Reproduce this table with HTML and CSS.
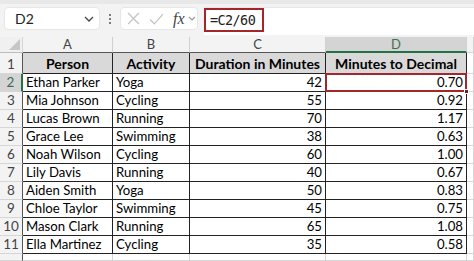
FILE: index.html
```html
<!DOCTYPE html>
<html>
<head>
<meta charset="utf-8">
<link rel="stylesheet" href="styles.css">
</head>
<body>
<div class="app">
  <div class="topbar">
    <div class="namebox">
      <span class="ref">D2</span>
      <svg class="chev" width="10" height="6" viewBox="0 0 10 6"><path d="M1 1 L5 5 L9 1" fill="none" stroke="#444" stroke-width="1.3"/></svg>
    </div>
    <div class="dots"><i></i><i></i><i></i></div>
    <div class="fxbox">
      <svg width="12" height="12" viewBox="0 0 12 12" class="ic-x"><path d="M1 1 L11 11 M11 1 L1 11" stroke="#c4c4c4" stroke-width="1.2" fill="none"/></svg>
      <svg width="14" height="11" viewBox="0 0 14 11" class="ic-ok"><path d="M1 6 L5 10 L13 1" stroke="#c4c4c4" stroke-width="1.2" fill="none"/></svg>
      <span class="fx">fx</span>
      <svg class="chev2" width="8" height="5" viewBox="0 0 8 5"><path d="M1 1 L4 4 L7 1" fill="none" stroke="#999" stroke-width="1.1"/></svg>
    </div>
    <div class="formula">
      <div class="ftext">=C2/60</div>
    </div>
  </div>
  <div class="sheet">
    <div class="c corner"><span class="tri"></span></div>
    <div class="c ch">A</div>
    <div class="c ch">B</div>
    <div class="c ch">C</div>
    <div class="c ch sel">D</div>
    <div class="c ch out"></div>

    <div class="c rh">1</div>
    <div class="c d h">Person</div>
    <div class="c d h">Activity</div>
    <div class="c d h">Duration in Minutes</div>
    <div class="c d h">Minutes to Decimal</div>
    <div class="c g"></div>

    <div class="c rh rsel">2</div>
    <div class="c d">Ethan Parker</div>
    <div class="c d">Yoga</div>
    <div class="c d n">42</div>
    <div class="c d n active">0.70<span class="handle"></span></div>
    <div class="c g"></div>

    <div class="c rh">3</div>
    <div class="c d">Mia Johnson</div>
    <div class="c d">Cycling</div>
    <div class="c d n">55</div>
    <div class="c d n">0.92</div>
    <div class="c g"></div>

    <div class="c rh">4</div>
    <div class="c d">Lucas Brown</div>
    <div class="c d">Running</div>
    <div class="c d n">70</div>
    <div class="c d n">1.17</div>
    <div class="c g"></div>

    <div class="c rh">5</div>
    <div class="c d">Grace Lee</div>
    <div class="c d">Swimming</div>
    <div class="c d n">38</div>
    <div class="c d n">0.63</div>
    <div class="c g"></div>

    <div class="c rh">6</div>
    <div class="c d">Noah Wilson</div>
    <div class="c d">Cycling</div>
    <div class="c d n">60</div>
    <div class="c d n">1.00</div>
    <div class="c g"></div>

    <div class="c rh">7</div>
    <div class="c d">Lily Davis</div>
    <div class="c d">Running</div>
    <div class="c d n">40</div>
    <div class="c d n">0.67</div>
    <div class="c g"></div>

    <div class="c rh">8</div>
    <div class="c d">Aiden Smith</div>
    <div class="c d">Yoga</div>
    <div class="c d n">50</div>
    <div class="c d n">0.83</div>
    <div class="c g"></div>

    <div class="c rh">9</div>
    <div class="c d">Chloe Taylor</div>
    <div class="c d">Swimming</div>
    <div class="c d n">45</div>
    <div class="c d n">0.75</div>
    <div class="c g"></div>

    <div class="c rh">10</div>
    <div class="c d">Mason Clark</div>
    <div class="c d">Running</div>
    <div class="c d n">65</div>
    <div class="c d n">1.08</div>
    <div class="c g"></div>

    <div class="c rh">11</div>
    <div class="c d">Ella Martinez</div>
    <div class="c d">Cycling</div>
    <div class="c d n">35</div>
    <div class="c d n">0.58</div>
    <div class="c g"></div>

    <div class="c rh"></div>
    <div class="c g"></div>
    <div class="c g"></div>
    <div class="c g"></div>
    <div class="c g"></div>
    <div class="c g"></div>
  </div>
</div>
</body>
</html>
```
FILE: styles.css
```css
* { box-sizing: border-box; }
html, body { margin: 0; padding: 0; }
body {
  width: 474px;
  height: 261px;
  overflow: hidden;
  background: #fff;
  font-family: Lato, "Liberation Sans", sans-serif;
}
.app { width: 474px; height: 261px; display: flex; flex-direction: column; }

.topbar {
  height: 37px;
  flex: none;
  background: #f3f3f3;
  border-top: 4px solid #e8e8e8;
  display: flex;
  align-items: flex-start;
  padding: 3px 0 0 4px;
}
.namebox {
  width: 96px;
  height: 23px;
  background: #fff;
  border: 1px solid #e6e6e6;
  border-radius: 4px;
  display: flex;
  align-items: center;
  justify-content: space-between;
  padding: 0 5px 0 10px;
  font-size: 14px;
  color: #222;
}
.dots {
  width: 20px;
  height: 23px;
  display: flex;
  flex-direction: column;
  align-items: center;
  justify-content: center;
  gap: 2px;
}
.dots i { display: block; width: 2px; height: 2px; background: #555; border-radius: 1px; }
.fxbox {
  width: 78px;
  height: 23px;
  background: #fff;
  border: 1px solid #e6e6e6;
  border-radius: 4px;
  display: flex;
  align-items: center;
  padding: 0 0 0 6px;
}
.ic-x { margin-right: 9px; width: 13px; height: 13px; }
.ic-ok { margin-right: 9px; width: 15px; height: 12px; }
.fx {
  font-family: "Liberation Serif", serif;
  font-style: italic;
  font-size: 16px;
  color: #444;
  margin-right: 3px;
  line-height: 1;
}
.formula {
  flex: 1;
  height: 28px;
  background: #fff;
  margin-left: 6px;
  border-top: 1px solid #e6e6e6;
}
.ftext {
  width: 60px;
  height: 24px;
  border: 2px solid #a3262a;
  font-family: "DejaVu Sans Mono", monospace;
  font-size: 13.5px;
  line-height: 20px;
  padding-left: 4px;
  color: #222;
  letter-spacing: -0.6px;
}

.sheet {
  flex: 1;
  display: grid;
  grid-template-columns: 23px 90px 77px 136px 141px 7px;
  grid-template-rows: 16px 21px repeat(10, 18px) 1fr;
  font-size: 13.2px;
  color: #000;
}
.c {
  border-right: 1px solid #d6d6d6;
  border-bottom: 1px solid #d6d6d6;
  display: flex;
  align-items: flex-end;
  white-space: nowrap;
  overflow: hidden;
  line-height: 17px;
}
.corner { background: #f0f0f0; position: relative; border-bottom-color: #bdbdbd; }
.tri {
  position: absolute;
  right: 2px;
  bottom: 2px;
  width: 0; height: 0;
  border-left: 11px solid transparent;
  border-bottom: 11px solid #c6c6c6;
}
.ch {
  background: #f3f3f3;
  justify-content: center;
  align-items: center;
  color: #444;
  font-size: 13px;
  border-bottom: 1px solid #555;
  border-right-color: #d0d0d0;
}
.ch.out { border-bottom-color: #d6d6d6; background: #f3f3f3; }
.ch.sel {
  background: #d4d4d4;
  border-bottom: 2px solid #217346;
  color: #3f6f55;
}
.rh {
  background: #f3f3f3;
  justify-content: center;
  align-items: flex-end;
  color: #444;
  font-size: 13.5px;
  border-right: 1px solid #555;
  border-bottom-color: #d6d6d6;
}
.rh.rsel {
  background: #d4d4d4;
  border-right: 2px solid #217346;
  color: #3f6f55;
}
.sheet .rh:last-of-type { border-right-color: #d0d0d0; }
.d {
  border-right: 1px solid #222;
  border-bottom: 1px solid #222;
  padding: 0 3px;
  align-items: flex-end;
}
.d.h {
  background: #d9d9d9;
  font-weight: 700;
  font-size: 14px;
  justify-content: center;
  align-items: center;
}
.d.n { justify-content: flex-end; }
.g { background: #fff; }
.active { position: relative; overflow: visible; }
.active::after {
  content: "";
  position: absolute;
  left: -1px; top: -1px; right: -1px; bottom: -1px;
  border: 2px solid #a3262a;
}
.handle {
  position: absolute;
  right: -3px;
  bottom: -3px;
  width: 5px;
  height: 5px;
  background: #6d2020;
  border: 1px solid #fff;
  z-index: 2;
}
```
